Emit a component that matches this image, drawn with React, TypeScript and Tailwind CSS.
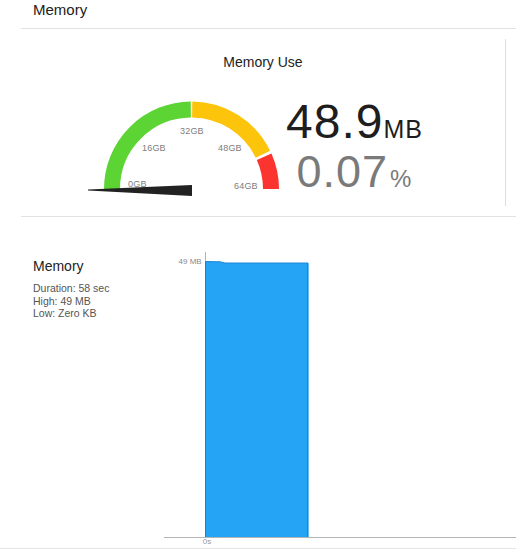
import React from 'react'

const cx = 107.5
const cy = 94
const r = 79.5

function pt(deg: number) {
  const a = (deg * Math.PI) / 180
  return `${(cx + r * Math.cos(a)).toFixed(2)} ${(cy - r * Math.sin(a)).toFixed(2)}`
}

function arc(from: number, to: number) {
  return `M ${pt(from)} A ${r} ${r} 0 0 1 ${pt(to)}`
}

function Gauge() {
  const labels = [
    { t: '0GB', x: 44, y: 92 },
    { t: '16GB', x: 58, y: 56 },
    { t: '32GB', x: 96, y: 39 },
    { t: '48GB', x: 134, y: 56 },
    { t: '64GB', x: 150, y: 94 },
  ]
  return (
    <svg width="198" height="105" viewBox="0 0 198 105" className="shrink-0">
      <path d={arc(180, 90.5)} stroke="#5bd434" strokeWidth="16" fill="none" />
      <path d={arc(89.5, 26)} stroke="#fdc40c" strokeWidth="16" fill="none" />
      <path d={arc(24, 0)} stroke="#fb3430" strokeWidth="16" fill="none" />
      {labels.map((l) => (
        <text
          key={l.t}
          x={l.x}
          y={l.y}
          fontSize="9"
          fill="#7d7d7d"
          fontFamily="'Liberation Sans', Arial, sans-serif"
          letterSpacing="0.2"
        >
          {l.t}
        </text>
      ))}
      <polygon points="4,94.6 108,90 108,101 4,95.6" fill="#222222" />
    </svg>
  )
}

function Chart() {
  return (
    <svg width="352" height="331" viewBox="0 0 352 331" className="shrink-0">
      <line x1="41.5" y1="35" x2="41.5" y2="321" stroke="#b5b5b5" strokeWidth="1" />
      <polygon points="41.5,44.5 56,44.8 61,46 144,46 144,320 41.5,320" fill="#25a3f5" />
      <polyline points="41.5,44.5 56,44.8 61,46 144,46" fill="none" stroke="#1c86d6" strokeWidth="1" />
      <line x1="41.5" y1="44.5" x2="41.5" y2="320" stroke="#1c7fcc" strokeWidth="1" />
      <line x1="143.5" y1="46" x2="143.5" y2="320" stroke="#1c86d6" strokeWidth="1" />
      <line x1="144.5" y1="46" x2="144.5" y2="320" stroke="#6dbdf0" strokeWidth="1" />
      <line x1="0" y1="320.5" x2="352" y2="320.5" stroke="#b5b5b5" strokeWidth="1" />
      <text
        x="37.7"
        y="47.3"
        fontSize="8"
        textAnchor="end"
        fill="#8a8a8a"
        fontFamily="'Liberation Sans', Arial, sans-serif"
      >
        49 MB
      </text>
      <text
        x="38.7"
        y="327.3"
        fontSize="8"
        fill="#9a9a9a"
        fontFamily="'Liberation Sans', Arial, sans-serif"
      >
        0s
      </text>
    </svg>
  )
}

export default function App() {
  return (
    <div className="w-[516px] h-[550px] bg-white overflow-hidden font-['Liberation_Sans',Arial,sans-serif] text-[#222]">
      {/* header */}
      <div className="ml-[21px] h-[29px] border-b border-[#e2e2e2] pl-[12px] pt-[1px]">
        <div className="text-[15px] leading-[18px]">Memory</div>
      </div>

      {/* memory use */}
      <div className="ml-[21px] h-[188px] border-b border-[#e2e2e2] flex items-center">
        <div className="w-[484px] h-full flex flex-col">
          <div className="pt-[25px] text-center text-[14px] leading-[16px]">Memory Use</div>
          <div className="mt-[25px] flex items-start pl-[63px]">
            <Gauge />
            <div className="ml-[4px] mt-[2px] flex flex-col items-center">
              <div className="text-[48px] leading-[50px] tracking-[1px] text-[#1e1e1e] whitespace-nowrap">
                48.9<span className="text-[25px] leading-none tracking-[1px]">MB</span>
              </div>
              <div className="text-[45px] leading-[50px] tracking-[1px] text-[#7a7a7a] whitespace-nowrap">
                0.07<span className="text-[24px] leading-none ml-[2px]">%</span>
              </div>
            </div>
          </div>
        </div>
        <div className="w-px h-[167px] bg-[#dedede]" />
      </div>

      {/* timeline */}
      <div className="h-[332px] border-b border-[#e6e6e6] flex">
        <div className="w-[164px] pl-[33px] pt-[41px]">
          <div className="text-[14px] leading-[16px]">Memory</div>
          <div className="mt-[8px] text-[10.5px] leading-[12.5px] text-[#555]">
            <div>Duration: 58 sec</div>
            <div>High: 49 MB</div>
            <div>Low: Zero KB</div>
          </div>
        </div>
        <Chart />
      </div>
    </div>
  )
}
